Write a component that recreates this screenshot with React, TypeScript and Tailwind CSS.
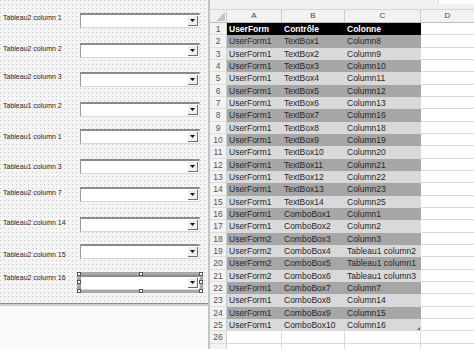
import React from "react";

type FormRow = { label: string; rowMt: string; labelMt: string; selected?: boolean };

const formRows: FormRow[] = [
  { label: "Tableau2 column 1", rowMt: "mt-[13px]", labelMt: "mt-0" },
  { label: "Tableau2 column 2", rowMt: "mt-[15px]", labelMt: "mt-[1px]" },
  { label: "Tableau2 column 3", rowMt: "mt-[14px]", labelMt: "mt-0" },
  { label: "Tableau1 column 2", rowMt: "mt-[15px]", labelMt: "-mt-[1px]" },
  { label: "Tableau1 column 1", rowMt: "mt-[12px]", labelMt: "mt-[3px]" },
  { label: "Tableau1 column 3", rowMt: "mt-[15px]", labelMt: "mt-[3px]" },
  { label: "Tableau2 column 7", rowMt: "mt-[13px]", labelMt: "mt-[1px]" },
  { label: "Tableau2 column 14", rowMt: "mt-[15px]", labelMt: "mt-[1px]" },
  { label: "Tableau2 column 15", rowMt: "mt-[12px]", labelMt: "mt-[6px]" },
];

type DataRow = { n: number; a: string; b: string; c: string };

const data: DataRow[] = [
  { n: 2, a: "UserForm1", b: "TextBox1", c: "Column8" },
  { n: 3, a: "UserForm1", b: "TextBox2", c: "Column9" },
  { n: 4, a: "UserForm1", b: "TextBox3", c: "Column10" },
  { n: 5, a: "UserForm1", b: "TextBox4", c: "Column11" },
  { n: 6, a: "UserForm1", b: "TextBox5", c: "Column12" },
  { n: 7, a: "UserForm1", b: "TextBox6", c: "Column13" },
  { n: 8, a: "UserForm1", b: "TextBox7", c: "Column16" },
  { n: 9, a: "UserForm1", b: "TextBox8", c: "Column18" },
  { n: 10, a: "UserForm1", b: "TextBox9", c: "Column19" },
  { n: 11, a: "UserForm1", b: "TextBox10", c: "Column20" },
  { n: 12, a: "UserForm1", b: "TextBox11", c: "Column21" },
  { n: 13, a: "UserForm1", b: "TextBox12", c: "Column22" },
  { n: 14, a: "UserForm1", b: "TextBox13", c: "Column23" },
  { n: 15, a: "UserForm1", b: "TextBox14", c: "Column25" },
  { n: 16, a: "UserForm1", b: "ComboBox1", c: "Column1" },
  { n: 17, a: "UserForm1", b: "ComboBox2", c: "Column2" },
  { n: 18, a: "UserForm2", b: "ComboBox3", c: "Column3" },
  { n: 19, a: "UserForm2", b: "ComboBox4", c: "Tableau1 column2" },
  { n: 20, a: "UserForm2", b: "ComboBox5", c: "Tableau1 column1" },
  { n: 21, a: "UserForm2", b: "ComboBox6", c: "Tableau1 column3" },
  { n: 22, a: "UserForm1", b: "ComboBox7", c: "Column7" },
  { n: 23, a: "UserForm1", b: "ComboBox8", c: "Column14" },
  { n: 24, a: "UserForm1", b: "ComboBox9", c: "Column15" },
  { n: 25, a: "UserForm1", b: "ComboBox10", c: "Column16" },
];

function Combo() {
  return (
    <div className="flex h-[15px] w-[120px] items-center justify-end border-t-2 border-l border-t-[#8a8a8a] border-l-[#9a9a9a] border-r border-b border-r-[#e4e4e4] border-b-[#d8d8d8] bg-white pr-[1px]">
      <div className="flex h-[10px] w-[10px] items-center justify-center border-r border-b border-r-[#6e6e6e] border-b-[#6e6e6e] bg-[#efefef]">
        <svg width="5" height="3" viewBox="0 0 5 3">
          <polygon points="0,0 5,0 2.5,3" fill="#111" />
        </svg>
      </div>
    </div>
  );
}

function Handle({ pos }: { pos: string }) {
  return <div className={`absolute h-[4px] w-[4px] border border-[#555] bg-white ${pos}`} />;
}

function UserFormPanel() {
  const label = "whitespace-nowrap text-[7px] leading-[9px] text-[#262626]";
  return (
    <div className="flex h-full w-[208px] flex-col bg-[#f8f8f8]">
      <div className="flex h-[303px] flex-col bg-[#f4f4f4] bg-[radial-gradient(circle_at_0.5px_0.5px,#c6c6c6_0.5px,transparent_0.6px)] bg-[length:4px_4px] pl-[3px]">
        {formRows.map((r) => (
          <div key={r.label} className={`flex items-start ${r.rowMt}`}>
            <div className={`w-[77px] ${label} ${r.labelMt}`}>{r.label}</div>
            <Combo />
          </div>
        ))}
        <div className="mt-[13px] flex items-start">
          <div className={`mt-[1px] w-[74px] ${label}`}>Tableau2 column 16</div>
          <div className="relative border-[3px] border-[#a9a9a9]">
            <Combo />
            <Handle pos="-left-[3px] -top-[3px]" />
            <Handle pos="left-[59px] -top-[3px]" />
            <Handle pos="-right-[3px] -top-[3px]" />
            <Handle pos="-left-[3px] top-[5px]" />
            <Handle pos="-right-[3px] top-[5px]" />
            <Handle pos="-left-[3px] -bottom-[3px]" />
            <Handle pos="left-[59px] -bottom-[3px]" />
            <Handle pos="-right-[3px] -bottom-[3px]" />
          </div>
        </div>
      </div>
      <div className="h-[1px] bg-[#8c8c8c]" />
      <div className="h-[2px] bg-[#d0d0d0]" />
      <div className="flex-1 bg-[#f9f9f9]" />
    </div>
  );
}

function Sheet() {
  const cell = "h-full whitespace-nowrap pl-[2px] text-[8.5px] leading-[12.33px]";
  const rowHead =
    "w-[17px] border-r border-b border-r-[#cfcfcf] border-b-[#dedede] bg-[#f2f2f2] text-center text-[8.5px] leading-[12px] text-[#555]";
  return (
    <div className="flex h-full w-[264px] flex-col bg-white font-['Liberation_Sans',Arial,sans-serif]">
      <div className="flex h-[10px] border-b border-[#d6d6d6] bg-[#f1f1f1]">
        <div className="flex-1" />
        <div className="mb-[5px] w-[36px] border-l border-[#d8d8d8] bg-white" />
      </div>
      <div className="flex h-[13px] border-b border-[#bdbdbd] bg-[#f2f2f2] text-[8px] leading-[12px] text-[#444]">
        <div className="relative w-[17px] border-r border-[#cfcfcf]">
          <svg className="absolute bottom-[1px] right-[1px]" width="9" height="9" viewBox="0 0 9 9">
            <polygon points="9,0 9,9 0,9" fill="#c4c4c4" />
          </svg>
        </div>
        <div className="w-[55px] border-r border-[#cfcfcf] text-center">A</div>
        <div className="w-[63px] border-r border-[#cfcfcf] text-center">B</div>
        <div className="w-[76px] border-r border-[#cfcfcf] text-center">C</div>
        <div className="flex-1 text-center">D</div>
      </div>
      <div className="flex h-[12.33px] shrink-0">
        <div className={rowHead}>1</div>
        <div className="flex w-[194px] bg-black font-bold text-white">
          <div className={`${cell} w-[55px]`}>UserForm</div>
          <div className={`${cell} w-[63px]`}>Contrôle</div>
          <div className={`${cell} w-[76px]`}>Colonne</div>
        </div>
        <div className="flex-1 border-b border-[#dadada]" />
      </div>
      {data.map((r) => (
        <div key={r.n} className="flex h-[12.33px] shrink-0">
          <div className={rowHead}>{r.n}</div>
          <div className={`relative flex w-[194px] text-[#262626] ${r.n % 2 === 0 ? "bg-[#a6a6a6]" : "bg-[#d9d9d9]"}`}>
            <div className={`${cell} w-[55px]`}>{r.a}</div>
            <div className={`${cell} w-[63px]`}>{r.b}</div>
            <div className={`${cell} w-[76px]`}>{r.c}</div>
            {r.n === 25 && (
              <svg className="absolute bottom-[1px] right-[1px]" width="3" height="3" viewBox="0 0 3 3">
                <polygon points="3,0 3,3 0,3" fill="#3a6ea5" />
              </svg>
            )}
          </div>
          <div className="flex-1 border-b border-[#dadada]" />
        </div>
      ))}
      <div className="flex h-[12.33px] shrink-0">
        <div className={rowHead}>26</div>
        <div className="w-[55px] border-r border-b border-[#dadada]" />
        <div className="w-[63px] border-r border-b border-[#dadada]" />
        <div className="w-[76px] border-r border-b border-[#dadada]" />
        <div className="flex-1 border-b border-[#dadada]" />
      </div>
      <div className="flex flex-1">
        <div className="w-[17px] border-r border-[#cfcfcf] bg-[#f2f2f2]" />
        <div className="w-[55px] border-r border-[#dadada]" />
        <div className="w-[63px] border-r border-[#dadada]" />
        <div className="w-[76px] border-r border-[#dadada]" />
        <div className="flex-1" />
      </div>
    </div>
  );
}

export default function App() {
  return (
    <div className="flex h-[349px] w-[474px] overflow-hidden bg-white font-['Liberation_Sans',Arial,sans-serif]">
      <UserFormPanel />
      <div className="h-full w-[2px] bg-[#c4c4c4]" />
      <Sheet />
    </div>
  );
}
